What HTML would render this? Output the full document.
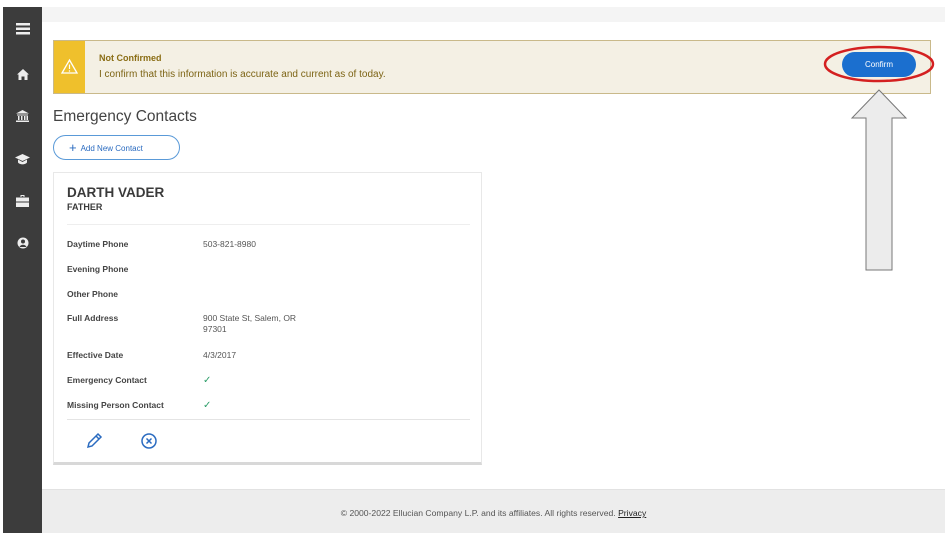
<!DOCTYPE html>
<html><head><style>
*{margin:0;padding:0;box-sizing:border-box}
body{width:945px;height:538px;position:relative;background:#fff;font-family:"Liberation Sans",sans-serif;overflow:hidden;color:#333}
.side{position:absolute;left:3px;top:7px;width:39px;height:526px;background:#3c3c3c}
.ic{position:absolute;left:0;width:39px;text-align:center;color:#f2f2f2}
.top{position:absolute;left:42px;top:7px;width:903px;height:15px;background:#f4f4f4}
.footer{position:absolute;left:42px;top:489px;width:903px;height:44px;background:#ededed;border-top:1px solid #e2e2e2;font-size:8.6px;color:#555;text-align:center;line-height:46px}
.banner{position:absolute;left:53px;top:40px;width:878px;height:54px;background:#f4f0e4;border:1px solid #c9b98a}
.ybox{position:absolute;left:0;top:0;width:31px;height:52px;background:#efc02c}
.card{position:absolute;left:53px;top:172px;width:429px;height:293px;border:1px solid #e8e8e8;border-bottom:3px solid #d8d8d8;background:#fff}
.row{position:absolute;left:13px;font-size:8.5px;font-weight:bold;color:#444}
.val{position:absolute;left:149px;font-size:8.5px;color:#555;line-height:11px}
.chk{position:absolute;left:149px;color:#2e9e6a;font-size:10px}
</style></head><body>
<div class="top"></div>
<div class="side">
 <div class="ic" style="top:15px"><svg width="14" height="12"><rect y="0" width="14" height="2.5" fill="#eee"/><rect y="4.5" width="14" height="2.5" fill="#eee"/><rect y="9" width="14" height="2.5" fill="#eee"/></svg></div>
 <div class="ic" style="top:60px"><svg width="12" height="11"><path d="M6 0L12 5.5H10.5V11H7.5V7.5H4.5V11H1.5V5.5H0Z" fill="#eee"/></svg></div>
 <div class="ic" style="top:102px"><svg width="13" height="12"><path d="M6.5 0L13 3.5H0Z M1 4.5h11v1H1z M2 6h1.5v4H2z M5 6h1.5v4H5z M8 6h1.5v4H8z M10.5 6H12v4h-1.5z M0 10.5h13V12H0z" fill="#eee"/></svg></div>
 <div class="ic" style="top:145px"><svg width="15" height="11"><path d="M7.5 0L15 3.5 7.5 7 0 3.5Z M3 5.5v3c2 2.5 7 2.5 9 0v-3L7.5 8Z" fill="#eee"/></svg></div>
 <div class="ic" style="top:187px"><svg width="13" height="12"><path d="M4.5 0h4v2h-1V1h-2v1h-1Z M0 2.5h13v4H0Z M0 7.5h13V12H0Z" fill="#eee"/></svg></div>
 <div class="ic" style="top:229px"><svg width="12" height="12"><circle cx="6" cy="6" r="5.5" fill="#eee"/><circle cx="6" cy="4.5" r="2" fill="#3c3c3c"/><path d="M2.5 10c1-3 6-3 7 0" fill="#3c3c3c"/></svg></div>
</div>
<div class="banner">
 <div class="ybox"><svg width="31" height="52"><path d="M15.5 19L23 32H8Z" fill="none" stroke="#fff" stroke-width="1.3"/><path d="M15.5 23.5v4.5" stroke="#fff" stroke-width="1.2"/><circle cx="15.5" cy="30" r=".7" fill="#fff"/></svg></div>
 <div style="position:absolute;left:45px;top:12px;font-size:9px;font-weight:bold;color:#8a6d14">Not Confirmed</div>
 <div style="position:absolute;left:45px;top:28px;font-size:10px;color:#7d6415">I confirm that this information is accurate and current as of today.</div>
 <div style="position:absolute;left:788px;top:11px;width:74px;height:25px;border-radius:13px;background:#1b6fcf;color:#fff;font-size:8px;text-align:center;line-height:25px">Confirm</div>
</div>
<svg style="position:absolute;left:0;top:0" width="945" height="538">
 <ellipse cx="879" cy="64" rx="54" ry="17" fill="none" stroke="#d42020" stroke-width="2.5"/>
 <path d="M879 90L906 118H892V270H866V118H852Z" fill="#ececec" stroke="#777" stroke-width="1"/>
</svg>
<div style="position:absolute;left:53px;top:108px;font-size:15.5px;color:#444">Emergency Contacts</div>
<div style="position:absolute;left:53px;top:135px;width:127px;height:25px;border:1px solid #5a9ad8;border-radius:13px;font-size:8px;color:#2a6bc0;line-height:23px;padding-left:15px"><span style="font-size:13px;vertical-align:-1px">+</span>&nbsp; Add New Contact</div>
<div class="card">
 <div style="position:absolute;left:13px;top:12px;font-size:13.5px;font-weight:bold;color:#3a3a3a">DARTH VADER</div>
 <div style="position:absolute;left:13px;top:29px;font-size:9px;font-weight:bold;color:#3a3a3a">FATHER</div>
 <div style="position:absolute;left:13px;top:51px;width:403px;border-top:1px solid #eee"></div>
 <div class="row" style="top:66px">Daytime Phone</div><div class="val" style="top:66px">503-821-8980</div>
 <div class="row" style="top:91px">Evening Phone</div>
 <div class="row" style="top:116px">Other Phone</div>
 <div class="row" style="top:140px">Full Address</div><div class="val" style="top:140px">900 State St, Salem, OR<br>97301</div>
 <div class="row" style="top:177px">Effective Date</div><div class="val" style="top:177px">4/3/2017</div>
 <div class="row" style="top:202px">Emergency Contact</div><div class="chk" style="top:202px">✓</div>
 <div class="row" style="top:227px">Missing Person Contact</div><div class="chk" style="top:227px">✓</div>
 <div style="position:absolute;left:13px;top:246px;width:403px;border-top:1px solid #e4e4e4"></div>
 <svg style="position:absolute;left:30px;top:258px" width="20" height="20"><path d="M4 16l1-4 9-9 3 3-9 9z M12 5l3 3" fill="none" stroke="#2a6bc0" stroke-width="1.5"/></svg>
 <svg style="position:absolute;left:86px;top:259px" width="18" height="18"><circle cx="9" cy="9" r="7" fill="none" stroke="#2a6bc0" stroke-width="1.5"/><path d="M6.5 6.5l5 5M11.5 6.5l-5 5" stroke="#2a6bc0" stroke-width="1.5"/></svg>
</div>
<div class="footer">© 2000-2022 Ellucian Company L.P. and its affiliates. All rights reserved. <u style="color:#222">Privacy</u></div>
</body></html>
